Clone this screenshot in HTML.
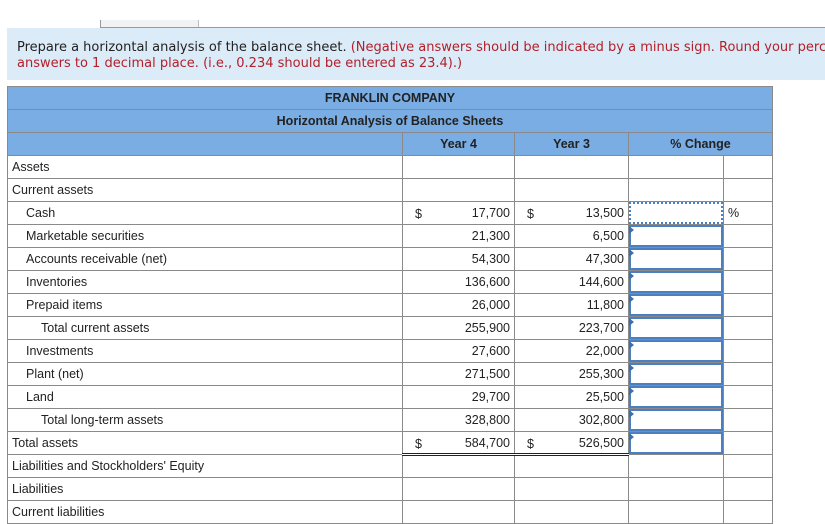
<!DOCTYPE html>
<html><head><style>
body{margin:0;width:825px;height:522px;overflow:hidden;background:#fff;font-family:"Liberation Sans",Arial,sans-serif;position:relative}
.tab{position:absolute;left:100px;top:20px;width:97px;height:7px;background:#f2f2f2;border-left:1px solid #999;border-right:1px solid #bbb}
.line{position:absolute;left:100px;right:0;top:27px;border-top:1px solid #999}
.info{position:absolute;left:7px;top:28px;width:818px;height:52px;background:#dcebf8;font-family:"DejaVu Sans",Verdana,sans-serif;font-size:13px;line-height:16px;color:#222;padding:12px 0 0 10px;box-sizing:border-box;white-space:nowrap;overflow:hidden}
.info span{color:#b3202a}
table{position:absolute;left:7px;top:86px;border-collapse:collapse;table-layout:fixed;font-size:12.5px;color:#222}
td{border:1px solid #8a8a8a;height:23px;padding:0 4px;box-sizing:border-box;white-space:nowrap;overflow:hidden}
tr{height:23px}
tr.h td{background:#7aade3;text-align:center;font-weight:bold;color:#222;font-size:12.5px}
.n{text-align:right;position:relative}
.d{position:absolute;left:12px;top:5px}
.i1{padding-left:18px}.i2{padding-left:33px}
td.in{position:relative;padding:0}
td.in div{position:absolute;left:0;top:0;right:0;bottom:0;border:2px solid #4a7fc1}
td.in div.dot{border:2px dotted #4a7fc1}
td.in i{position:absolute;left:0;top:1px;width:0;height:0;border-top:4px solid transparent;border-bottom:4px solid transparent;border-left:5px solid #3a6fb5}
.tb{border-top:1.5px solid #222}
.db{border-bottom:3px double #222}
</style></head><body>
<div class="tab"></div><div class="line"></div>
<div class="info">Prepare a horizontal analysis of the balance sheet. <span>(Negative answers should be indicated by a minus sign. Round your percentage<br>answers to 1 decimal place. (i.e., 0.234 should be entered as 23.4).)</span></div>
<table>
<colgroup><col style="width:395px"><col style="width:112px"><col style="width:114px"><col style="width:95px"><col style="width:49px"></colgroup>
<tr class="h"><td colspan="5">FRANKLIN COMPANY</td></tr>
<tr class="h"><td colspan="5">Horizontal Analysis of Balance Sheets</td></tr>
<tr class="h"><td></td><td>Year 4</td><td>Year 3</td><td colspan="2">% Change</td></tr>
<tr><td>Assets</td><td></td><td></td><td></td><td></td></tr>
<tr><td>Current assets</td><td></td><td></td><td></td><td></td></tr>
<tr><td class="i1">Cash</td><td class="n"><span class="d">$</span>17,700</td><td class="n"><span class="d">$</span>13,500</td><td class="in"><div class="dot"></div></td><td>%</td></tr>
<tr><td class="i1">Marketable securities</td><td class="n">21,300</td><td class="n">6,500</td><td class="in"><div></div><i></i></td><td></td></tr>
<tr><td class="i1">Accounts receivable (net)</td><td class="n">54,300</td><td class="n">47,300</td><td class="in"><div></div><i></i></td><td></td></tr>
<tr><td class="i1">Inventories</td><td class="n">136,600</td><td class="n">144,600</td><td class="in"><div></div><i></i></td><td></td></tr>
<tr><td class="i1">Prepaid items</td><td class="n">26,000</td><td class="n">11,800</td><td class="in"><div></div><i></i></td><td></td></tr>
<tr><td class="i2">Total current assets</td><td class="n tb">255,900</td><td class="n tb">223,700</td><td class="in"><div></div><i></i></td><td></td></tr>
<tr><td class="i1">Investments</td><td class="n">27,600</td><td class="n">22,000</td><td class="in"><div></div><i></i></td><td></td></tr>
<tr><td class="i1">Plant (net)</td><td class="n">271,500</td><td class="n">255,300</td><td class="in"><div></div><i></i></td><td></td></tr>
<tr><td class="i1">Land</td><td class="n">29,700</td><td class="n">25,500</td><td class="in"><div></div><i></i></td><td></td></tr>
<tr><td class="i2">Total long-term assets</td><td class="n tb">328,800</td><td class="n tb">302,800</td><td class="in"><div></div><i></i></td><td></td></tr>
<tr><td>Total assets</td><td class="n tb db"><span class="d">$</span>584,700</td><td class="n tb db"><span class="d">$</span>526,500</td><td class="in"><div></div><i></i></td><td></td></tr>
<tr><td>Liabilities and Stockholders' Equity</td><td></td><td></td><td></td><td></td></tr>
<tr><td>Liabilities</td><td></td><td></td><td></td><td></td></tr>
<tr><td>Current liabilities</td><td></td><td></td><td></td><td></td></tr>
</table>
</body></html>
